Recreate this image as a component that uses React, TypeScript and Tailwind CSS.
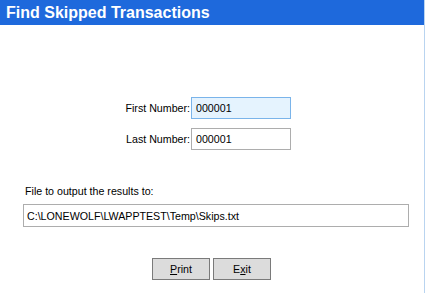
import React from "react";

const font = { fontFamily: '"Liberation Sans", Arial, sans-serif' };

function Field({ label, value, focused }: { label: string; value: string; focused?: boolean }) {
  return (
    <div className="flex items-center">
      <div className="w-[191px] shrink-0 pr-[1px] text-right text-[10.67px] text-black">{label}</div>
      <div
        className={
          "flex h-[22px] w-[100px] items-center border px-[4px] text-[10.67px] text-black " +
          (focused ? "border-[#7ab4ea] bg-[#e5f3fe]" : "border-[#adadad] bg-white")
        }
      >
        {value}
      </div>
    </div>
  );
}

function Button({ children }: { children: React.ReactNode }) {
  return (
    <button
      type="button"
      className="flex h-[22px] w-[58px] items-center justify-center border border-[#7a7a7a] bg-[#dcdcdc] text-[10.67px] text-black"
    >
      {children}
    </button>
  );
}

export default function App() {
  return (
    <div className="flex h-[293px] w-[425px] bg-white" style={font}>
      <div className="flex w-[424px] flex-col">
        <div className="flex h-[25px] shrink-0 items-center bg-[#1e69dc] px-[6px] pt-[1px] text-[16px] font-bold text-white">
          Find Skipped Transactions
        </div>

        <div className="mt-[72px] flex flex-col gap-[9px]">
          <Field label="First Number:" value="000001" focused />
          <Field label="Last Number:" value="000001" />
        </div>

        <div className="mt-[33px] pl-[25px] text-[10.67px] text-black">File to output the results to:</div>
        <div className="ml-[23px] mt-[5px] flex h-[23px] w-[386px] items-center border border-[#adadad] px-[3px] text-[10.67px] text-black">
          C:\LONEWOLF\LWAPPTEST\Temp\Skips.txt
        </div>

        <div className="ml-[152px] mt-[31px] flex gap-[3px]">
          <Button>
            <span className="underline">P</span>rint
          </Button>
          <Button>
            E<span className="underline">x</span>it
          </Button>
        </div>
      </div>
      <div className="w-[1px] bg-[#b9d4f0]" />
    </div>
  );
}
